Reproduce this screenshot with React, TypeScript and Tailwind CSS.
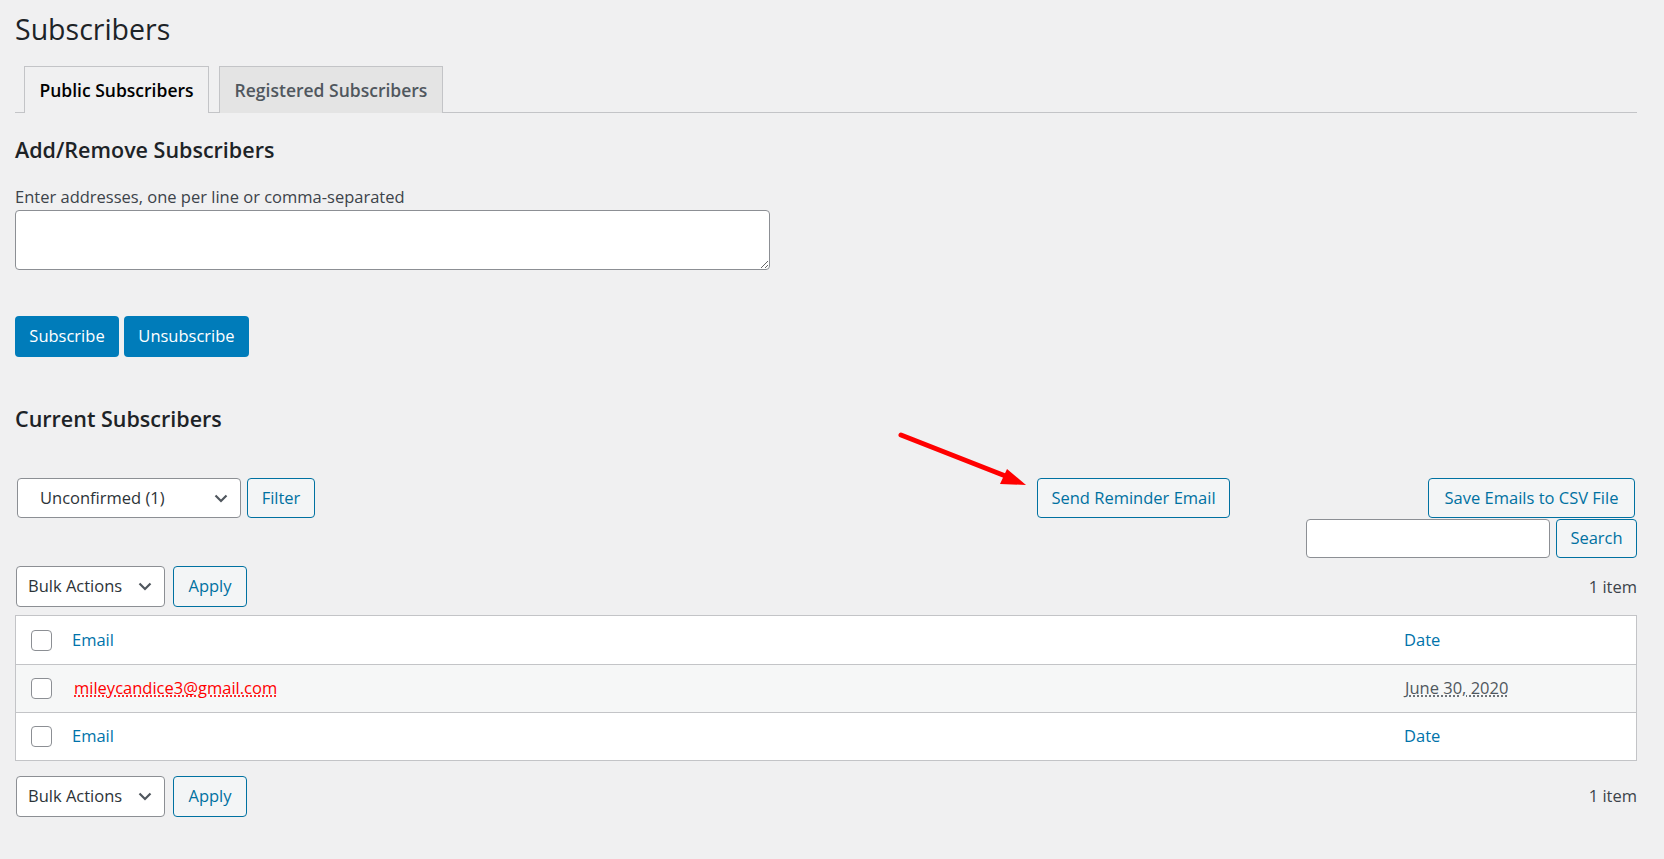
import React from "react";

const font = { fontFamily: '"Open Sans", "Noto Sans", Arial, sans-serif' };

function Chevron() {
    return (
        <svg width="14" height="9" viewBox="0 0 14 9" className="shrink-0">
            <path d="M1.5 1.5 L7 7 L12.5 1.5" fill="none" stroke="#50575e" strokeWidth="2.2" />
        </svg>
    );
}

function Checkbox() {
    return <span className="block w-[21px] h-[21px] rounded-[4px] border border-[#8c8f94] bg-white shrink-0" />;
}

function BulkActions() {
    return (
        <div className="flex items-center gap-[8px] h-[41px]">
            <div className="w-[149px] h-[41px] ml-[1px] rounded-[4px] border border-[#8c8f94] bg-white flex items-center justify-between pl-[11px] pr-[12px] text-[16.5px] text-[#2c3338]">
                <span>Bulk Actions</span>
                <Chevron />
            </div>
            <button className="w-[74px] h-[41px] rounded-[4px] border border-[#0071a1] bg-[#f3f5f6] text-[16.5px] text-[#0071a1]">Apply</button>
        </div>
    );
}

export default function App() {
    return (
        <div className="relative min-h-screen bg-[#f0f0f1] pl-[15px] pr-[27px] text-[#3c434a]" style={font}>
            <h1 className="h-[66px] pt-[11px] text-[28.5px] leading-[36px] font-normal text-[#1d2327]">Subscribers</h1>

            {/* Tabs */}
            <div className="flex h-[47px] border-b border-[#c3c4c7] pl-[9px] gap-[10px]">
                <div className="w-[185px] h-[47px] border border-b-0 border-[#c3c4c7] bg-[#f0f0f1] flex items-center justify-center text-[17.5px] font-semibold text-[#000]">
                    Public Subscribers
                </div>
                <div className="w-[224px] h-[47px] border border-b-0 border-[#c3c4c7] bg-[#e4e4e4] flex items-center justify-center text-[17.5px] font-semibold text-[#50575e]">
                    Registered Subscribers
                </div>
            </div>

            <h2 className="mt-[22px] text-[21.5px] leading-[30px] font-semibold text-[#1d2327]">Add/Remove Subscribers</h2>

            <p className="mt-[22px] text-[16.5px] leading-[20px] text-[#3c434a]">Enter addresses, one per line or comma-separated</p>
            <textarea className="block mt-[3px] w-[755px] h-[60px] rounded-[4px] border border-[#8c8f94] bg-white outline-none" />

            <div className="flex gap-[5px] mt-[46px]">
                <button className="w-[104px] h-[41px] rounded-[4px] bg-[#007cba] text-white text-[16.5px]">Subscribe</button>
                <button className="w-[125px] h-[41px] rounded-[4px] bg-[#007cba] text-white text-[16.5px]">Unsubscribe</button>
            </div>

            <h2 className="mt-[47px] text-[21.5px] leading-[30px] font-semibold text-[#1d2327]">Current Subscribers</h2>

            {/* Filter / actions row */}
            <div className="flex items-center mt-[44px] h-[40px]">
                <div className="ml-[2px] w-[224px] h-[40px] rounded-[4px] border border-[#8c8f94] bg-white flex items-center justify-between pl-[22px] pr-[12px] text-[16.5px] text-[#2c3338]">
                    <span>Unconfirmed (1)</span>
                    <Chevron />
                </div>
                <button className="ml-[6px] w-[68px] h-[40px] rounded-[4px] border border-[#0071a1] bg-[#f3f5f6] text-[16.5px] text-[#0071a1]">Filter</button>
                <button className="ml-[722px] w-[193px] h-[40px] rounded-[4px] border border-[#0071a1] bg-[#f3f5f6] text-[16.5px] text-[#0071a1]">Send Reminder Email</button>
                <button className="ml-auto mr-[2px] w-[207px] h-[40px] rounded-[4px] border border-[#0071a1] bg-[#f3f5f6] text-[16.5px] text-[#0071a1]">Save Emails to CSV File</button>
            </div>

            <div className="flex justify-end gap-[6px] mt-[1px] h-[39px]">
                <input className="w-[244px] h-[39px] rounded-[4px] border border-[#8c8f94] bg-white outline-none" />
                <button className="w-[81px] h-[39px] rounded-[4px] border border-[#0071a1] bg-[#f3f5f6] text-[16.5px] text-[#0071a1]">Search</button>
            </div>

            <div className="flex items-center justify-between mt-[8px]">
                <BulkActions />
                <span className="text-[16.5px] text-[#3c434a] pt-[1px]">1 item</span>
            </div>

            {/* Table */}
            <div className="mt-[8px] border border-[#c3c4c7] bg-white text-[16.5px]">
                <div className="flex items-center h-[48px] pl-[15px]">
                    <Checkbox />
                    <span className="ml-[20px] text-[#0073aa]">Email</span>
                    <span className="ml-auto w-[232px] text-[#0073aa]">Date</span>
                </div>
                <div className="flex items-center h-[48px] pl-[15px] bg-[#f6f7f7] border-t border-[#c3c4c7]">
                    <Checkbox />
                    <span className="ml-[22px] text-[#ff0000] underline decoration-dotted decoration-[#ff0000] underline-offset-[2px]">mileycandice3@gmail.com</span>
                    <span className="ml-auto w-[231px] text-[#50575e] underline decoration-dotted underline-offset-[2px]">June 30, 2020</span>
                </div>
                <div className="flex items-center h-[48px] pl-[15px] border-t border-[#c3c4c7]">
                    <Checkbox />
                    <span className="ml-[20px] text-[#0073aa]">Email</span>
                    <span className="ml-auto w-[232px] text-[#0073aa]">Date</span>
                </div>
            </div>

            <div className="flex items-center justify-between mt-[15px]">
                <BulkActions />
                <span className="text-[16.5px] text-[#3c434a]">1 item</span>
            </div>

            {/* Annotation arrow */}
            <svg className="absolute left-0 top-0 pointer-events-none" width="1664" height="859">
                <line x1="901" y1="435" x2="1008" y2="477" stroke="#ff0000" strokeWidth="5" strokeLinecap="round" />
                <polygon points="1026,485 1007,469 1000,484" fill="#ff0000" />
            </svg>
        </div>
    );
}
